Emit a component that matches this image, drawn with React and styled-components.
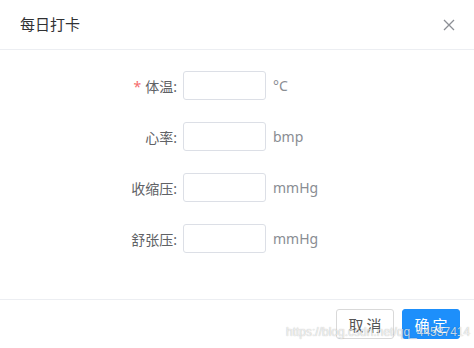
import React from "react";
import styled, { createGlobalStyle } from "styled-components";

const Global = createGlobalStyle`
  html, body { margin: 0; padding: 0; background: #fff; }
  body { font-family: "Noto Sans", "Noto Sans CJK SC", sans-serif; }
  * { box-sizing: border-box; }
`;

const Dialog = styled.div`
  position: relative;
  width: 474px;
  height: 348px;
  background: #fff;
  overflow: hidden;
  display: flex;
  flex-direction: column;
`;

const Header = styled.div`
  height: 50px;
  flex: none;
  display: flex;
  align-items: center;
  justify-content: space-between;
  padding: 0 18px 0 20px;
  border-bottom: 1px solid #eceef2;
`;

const Title = styled.div`
  font-size: 15px;
  color: #303133;
  line-height: 1;
`;

const Close = styled.button`
  border: 0;
  background: none;
  padding: 0;
  width: 14px;
  height: 14px;
  display: flex;
  align-items: center;
  justify-content: center;
  cursor: pointer;
`;

const Body = styled.div`
  flex: 1;
  padding: 21px 0 0 0;
  display: flex;
  flex-direction: column;
  gap: 22px;
`;

const Row = styled.div`
  display: grid;
  grid-template-columns: 183px 83px auto;
  align-items: center;
  height: 29px;
`;

const Label = styled.label`
  text-align: right;
  padding-right: 6px;
  font-size: 14px;
  color: #606266;
`;

const Star = styled.span`
  color: #f56c6c;
  margin-right: 4px;
`;

const Input = styled.input`
  width: 83px;
  height: 29px;
  border: 1px solid #dcdfe6;
  border-radius: 3px;
  outline: none;
  background: #fff;
`;

const Unit = styled.span`
  padding-left: 7px;
  font-size: 14px;
  color: #8a8d93;
`;

const Footer = styled.div`
  flex: none;
  height: 49px;
  border-top: 1px solid #eceef2;
  display: flex;
  justify-content: flex-end;
  gap: 8px;
  padding: 9px 14px 0 0;
`;

const Button = styled.button`
  width: 58px;
  height: 30px;
  border-radius: 3px;
  font-family: inherit;
  font-size: 15px;
  letter-spacing: 3px;
  text-indent: 3px;
  border: 1px solid ${p => (p.$primary ? "#1d8ffb" : "#d9d9d9")};
  background: ${p => (p.$primary ? "#1d8ffb" : "#fff")};
  color: ${p => (p.$primary ? "#fff" : "#555")};
  cursor: pointer;
`;

const Watermark = styled.span`
  position: absolute;
  left: 286px;
  top: 325px;
  font-family: "Liberation Sans", sans-serif;
  font-size: 12px;
  color: rgba(255, 255, 255, 0.75);
  text-shadow: 0 0 1px rgba(0, 0, 0, 0.35);
  pointer-events: none;
  white-space: nowrap;
`;

const fields = [
  { label: "体温", unit: "°C", required: true },
  { label: "心率", unit: "bmp" },
  { label: "收缩压", unit: "mmHg" },
  { label: "舒张压", unit: "mmHg" },
];

export default function App() {
  return (
    <Dialog>
      <Global />
      <Header>
        <Title>每日打卡</Title>
        <Close aria-label="close">
          <svg width="12" height="12" viewBox="0 0 12 12">
            <path d="M1 1L11 11M11 1L1 11" stroke="#8c8f95" strokeWidth="1.3" />
          </svg>
        </Close>
      </Header>
      <Body>
        {fields.map(f => (
          <Row key={f.label}>
            <Label>
              {f.required && <Star>*</Star>}
              {f.label}:
            </Label>
            <Input />
            <Unit>{f.unit}</Unit>
          </Row>
        ))}
      </Body>
      <Footer>
        <Button>取消</Button>
        <Button $primary>确定</Button>
      </Footer>
      <Watermark>https://blog.csdn.net/qq_44537414</Watermark>
    </Dialog>
  );
}
